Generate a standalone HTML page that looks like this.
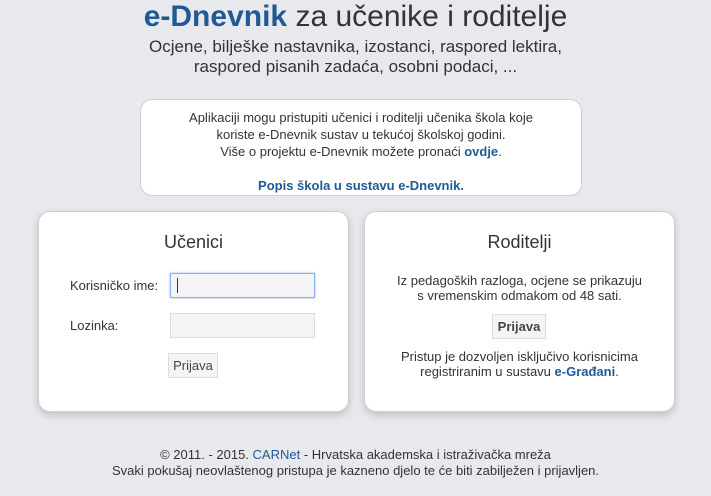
<!DOCTYPE html>
<html><head><meta charset="utf-8"><style>
body{margin:0;width:711px;height:496px;background:#e8e9ec;font-family:"Liberation Sans",sans-serif;color:#333;position:relative;overflow:hidden}
.c{position:absolute;left:0;width:711px;text-align:center;white-space:nowrap}
.b{color:#1f5a96}
.box{position:absolute;background:#fff;border:1px solid #cfd0d4;border-radius:12px}
.card{box-shadow:0 3px 8px rgba(0,0,0,.18)}
.t{position:absolute;white-space:nowrap;text-align:center}
input{position:absolute;box-sizing:border-box;background:#f4f4f4;border:1px solid #ddd;margin:0}
.btn{position:absolute;background:#f4f4f4;border:1px solid #ddd;font-size:13px;color:#444;text-align:center;box-sizing:border-box}
</style></head><body>
<div class="c" style="top:0px;font-size:30px;color:#333"><span class="b" style="font-weight:bold">e-Dnevnik</span> za učenike i roditelje</div>
<div class="c" style="top:37px;font-size:17px;line-height:20px">Ocjene, bilješke nastavnika, izostanci, raspored lektira,<br>raspored pisanih zadaća, osobni podaci, ...</div>

<div class="box" style="left:140px;top:99px;width:440px;height:95px"></div>
<div class="c" style="left:140px;width:442px;top:109px;font-size:13px;line-height:17px">Aplikaciji mogu pristupiti učenici i roditelji učenika škola koje<br>koriste e-Dnevnik sustav u tekućoj školskoj godini.<br>Više o projektu e-Dnevnik možete pronaći <span class="b" style="font-weight:bold">ovdje</span>.<br><br><span class="b" style="font-weight:bold">Popis škola u sustavu e-Dnevnik.</span></div>

<div class="box card" style="left:38px;top:211px;width:309px;height:199px"></div>
<div class="t" style="left:38px;width:311px;top:232px;font-size:18px;color:#333">Učenici</div>
<div class="t" style="left:70px;top:278px;font-size:13px;text-align:left">Korisničko ime:</div>
<input style="left:170px;top:273px;width:145px;height:25px;border:1px solid #8ab0f0;box-shadow:0 0 2px #8ab0f0">
<div style="position:absolute;left:177px;top:278px;width:1px;height:15px;background:#333"></div>
<div class="t" style="left:70px;top:318px;font-size:13px;text-align:left">Lozinka:</div>
<input style="left:170px;top:313px;width:145px;height:25px">
<div class="btn" style="left:168px;top:353px;width:50px;height:25px;line-height:23px">Prijava</div>

<div class="box card" style="left:364px;top:211px;width:309px;height:199px"></div>
<div class="t" style="left:364px;width:311px;top:232px;font-size:18px">Roditelji</div>
<div class="t" style="left:364px;width:311px;top:273px;font-size:13px;line-height:15px">Iz pedagoških razloga, ocjene se prikazuju<br>s vremenskim odmakom od 48 sati.</div>
<div class="btn" style="left:492px;top:314px;width:54px;height:25px;line-height:23px;font-weight:bold">Prijava</div>
<div class="t" style="left:364px;width:311px;top:349px;font-size:13px;line-height:15px">Pristup je dozvoljen isključivo korisnicima<br>registriranim u sustavu <span class="b" style="font-weight:bold">e-Građani</span>.</div>

<div class="c" style="top:447px;font-size:13px;line-height:16px">© 2011. - 2015. <span class="b">CARNet</span> - Hrvatska akademska i istraživačka mreža<br>Svaki pokušaj neovlaštenog pristupa je kazneno djelo te će biti zabilježen i prijavljen.</div>
</body></html>
